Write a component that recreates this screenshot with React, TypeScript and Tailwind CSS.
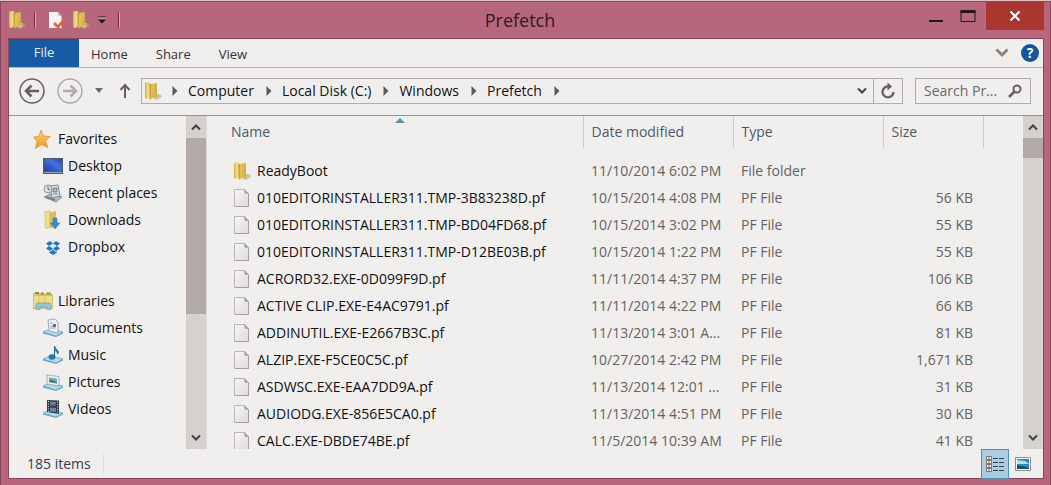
import { ReactNode } from 'react';
import clsx from 'clsx';

interface FileEntry {
  name: string;
  modified: string;
  type: string;
  size?: string;
}

interface NavItem {
  label: string;
  icon: ReactNode;
}

const files: FileEntry[] = [
  { name: 'ReadyBoot', modified: '11/10/2014 6:02 PM', type: 'File folder' },
  { name: '010EDITORINSTALLER311.TMP-3B83238D.pf', modified: '10/15/2014 4:08 PM', type: 'PF File', size: '56 KB' },
  { name: '010EDITORINSTALLER311.TMP-BD04FD68.pf', modified: '10/15/2014 3:02 PM', type: 'PF File', size: '55 KB' },
  { name: '010EDITORINSTALLER311.TMP-D12BE03B.pf', modified: '10/15/2014 1:22 PM', type: 'PF File', size: '55 KB' },
  { name: 'ACRORD32.EXE-0D099F9D.pf', modified: '11/11/2014 4:37 PM', type: 'PF File', size: '106 KB' },
  { name: 'ACTIVE CLIP.EXE-E4AC9791.pf', modified: '11/11/2014 4:22 PM', type: 'PF File', size: '66 KB' },
  { name: 'ADDINUTIL.EXE-E2667B3C.pf', modified: '11/13/2014 3:01 A...', type: 'PF File', size: '81 KB' },
  { name: 'ALZIP.EXE-F5CE0C5C.pf', modified: '10/27/2014 2:42 PM', type: 'PF File', size: '1,671 KB' },
  { name: 'ASDWSC.EXE-EAA7DD9A.pf', modified: '11/13/2014 12:01 ...', type: 'PF File', size: '31 KB' },
  { name: 'AUDIODG.EXE-856E5CA0.pf', modified: '11/13/2014 4:51 PM', type: 'PF File', size: '30 KB' },
  { name: 'CALC.EXE-DBDE74BE.pf', modified: '11/5/2014 10:39 AM', type: 'PF File', size: '41 KB' },
];

const FolderIcon = () => (
  <svg width="18" height="20" viewBox="0 0 18 20" className="shrink-0">
    <defs>
      <linearGradient id="folderFront" x1="0" x2="1" y1="0" y2="0.3">
        <stop offset="0" stopColor="#c99f35" />
        <stop offset="0.35" stopColor="#e3c35c" />
        <stop offset="1" stopColor="#d3ae48" />
      </linearGradient>
    </defs>
    <path d="M13 13l4 .5 1 2.500-4 2.500-4 .5z" fill="#a9a59c" opacity="0.5" />
    <path d="M11 12.500l3.500.5v4l-4 1.500z" fill="#dcc06a" />
    <path d="M1 1.500l5-.5v15l-2.500 2L1 17z" fill="#f0da83" />
    <path d="M1 1.500l1.500 1v15L1 17z" fill="#d9b650" />
    <path d="M5.500 3L13 2v13.500L6 18.500z" fill="url(#folderFront)" />
    <path d="M5.500 3l1.500.5V18l-1.500.5z" fill="#b08a2c" opacity="0.5" />
  </svg>
);

const FileIcon = () => (
  <svg width="18" height="20" viewBox="0 0 18 20" className="shrink-0">
    <defs>
      <linearGradient id="sheet" x1="0" x2="1" y1="0" y2="1">
        <stop offset="0" stopColor="#f8f7f6" />
        <stop offset="1" stopColor="#dedbda" />
      </linearGradient>
    </defs>
    <path d="M1.500 1.500h10l4 4v13h-14z" fill="url(#sheet)" stroke="#bab7b6" />
    <path d="M11.500 1.500l4 4h-3.500z" fill="#a8a4a3" stroke="#a8a4a3" strokeWidth="0.700" />
    <path d="M15.500 6v12.500h-13" fill="none" stroke="#a39f9e" />
  </svg>
);

const PropertiesIcon = () => (
  <svg width="18" height="20" viewBox="0 0 18 20">
    <path d="M1 2h9l3.500 4v12H1z" fill="#f7f4f4" />
    <path d="M10 2v4h3.500z" fill="#c5bcbe" />
    <path d="M6 13l4 4 6-7.500" fill="none" stroke="#e0683a" strokeWidth="2.800" />
  </svg>
);

const StarIcon = () => (
  <svg width="18" height="20" viewBox="0 0 18 20">
    <defs>
      <linearGradient id="star" x1="0" x2="0" y1="0" y2="1">
        <stop offset="0" stopColor="#ffd873" />
        <stop offset="1" stopColor="#ef9620" />
      </linearGradient>
    </defs>
    <path d="M8 1l2.500 6 7 .5-5 4.500 2.500 6.500-6.500-3-6 4 1.500-7-3.500-4.500 5.500-.5z" fill="url(#star)" stroke="#d98d25" strokeWidth="0.700" />
  </svg>
);

const DesktopIcon = () => (
  <svg width="20" height="18" viewBox="0 0 20 18">
    <defs>
      <linearGradient id="screen" x1="0" x2="1" y1="1" y2="0">
        <stop offset="0" stopColor="#1b3fae" />
        <stop offset="0.600" stopColor="#4473dc" />
        <stop offset="1" stopColor="#2048b5" />
      </linearGradient>
    </defs>
    <path d="M0 1h20v16H0z" fill="#525c67" />
    <path d="M1.500 2h17v12h-17z" fill="url(#screen)" />
    <path d="M1 15.500h18" stroke="#8fa6b9" />
  </svg>
);

const RecentIcon = () => (
  <svg width="20" height="20" viewBox="0 0 20 20">
    <path d="M1 14l6-3 12 3-6 5z" fill="#aebbc4" stroke="#737f87" strokeWidth="0.800" />
    <path d="M7 3l8-1 2 11-8 2z" fill="#dfe6ea" stroke="#7f8a92" />
    <path d="M10 5h4v4h-4zM10 11h5" stroke="#6f8593" fill="#a7bbc7" />
    <circle cx="5" cy="6" r="4" fill="#dcdfe1" stroke="#8f969b" />
    <path d="M5 3.500V6l2 1" stroke="#59636b" fill="none" />
    <path d="M3 14l9 3" stroke="#647d90" strokeWidth="1.500" />
  </svg>
);

const DownloadsIcon = () => (
  <svg width="20" height="20" viewBox="0 0 20 20">
    <path d="M2 1.500l5-.5v16l-3 1.500-2-1z" fill="#f0dd94" stroke="#ceb15c" strokeWidth="0.600" />
    <path d="M6 2.500L13 1v15l-6 2.500z" fill="#dfbd5d" />
    <path d="M10 8h4v5h3l-5 6-5-6h3z" fill="#3191ca" stroke="#247aad" strokeWidth="0.500" />
  </svg>
);

const DropboxIcon = () => (
  <svg width="20" height="20" viewBox="0 0 20 20" fill="#1877c9">
    <path d="M7 4l3 2.500-4 2.500-3-2.500zM13 4l4 2.500L14 9l-4-2.500zM3 11.500L6 9l4 2.500L7 14zM14 9l3 2.500-4 2.500-3-2.500zM6 14.500l1 .5 3-2.500 3 2.500 1-.5v1L10 18l-4-2.500z" />
  </svg>
);

const LibrariesIcon = () => (
  <svg width="20" height="20" viewBox="0 0 20 20">
    <path d="M0 2h8l1 1h10.500v15H0z" fill="#e0c05c" />
    <path d="M2 1h4v2H2z" fill="#58a654" />
    <path d="M8 1.500h3v2H8z" fill="#d96f4c" />
    <path d="M13 1.500h5v2h-5z" fill="#79ad62" />
    <path d="M.5 4.500h19v12H.5z" fill="#f0db86" stroke="#d5b654" strokeWidth="0.700" />
    <path d="M6 5v8M12 5v8" stroke="#dfc56b" />
    <path d="M3 18.500V14q0-2 2-2h11q2 0 2 2v4.500h-4V16H7v2.500z" fill="#8fc5e1" stroke="#5d9dbd" strokeWidth="0.600" />
  </svg>
);

// the blue tray that each library icon stands on
const LibraryTray = ({ children }: { children: ReactNode }) => (
  <svg width="20" height="20" viewBox="0 0 20 20">
    <path d="M0 14l7-3 13 3-7 4z" fill="#b4daed" stroke="#71a6c6" strokeWidth="0.800" />
    <path d="M0 14v1.500l13 3.500 7-3.500V14l-7 4z" fill="#6ca3c5" />
    {children}
  </svg>
);

const DocumentsIcon = () => (
  <LibraryTray>
    <path d="M5 2l7-1 3 3v11l-9-2z" fill="#f0f2f7" stroke="#8e96b2" strokeWidth="0.800" />
    <path d="M7 5h3M7 8h6M7 10h6" stroke="#9da3bf" />
    <path d="M10 6h3v3h-3z" fill="#5073a2" />
  </LibraryTray>
);

const MusicIcon = () => (
  <LibraryTray>
    <ellipse cx="9" cy="12" rx="3.500" ry="2.800" fill="#2874ac" />
    <path d="M11.500 12V1q1 3 3.500 5 1 2-.5 3 0-3-2-3.500" fill="#3285bf" stroke="#246b9e" />
  </LibraryTray>
);

const PicturesIcon = () => (
  <LibraryTray>
    <path d="M4 3l12 1.500V14L4 12z" fill="#e8f0f4" stroke="#8ba2b0" strokeWidth="0.800" />
    <path d="M6 5.500l8 1v5L6 10z" fill="#74aed0" />
    <path d="M6 8.500l3-1 5 3v1L6 10z" fill="#4d805e" />
  </LibraryTray>
);

const VideosIcon = () => (
  <LibraryTray>
    <path d="M4 1l12 .5V15L4 13z" fill="#373b42" />
    <path d="M7 2.500l6 .5v4l-6-.5zM7 8.500l6 .5v4l-6-.5z" fill="#5b87b7" />
    <path d="M7 5l3 1 3-2v3l-6-.5z" fill="#8a5145" />
    <path d="M5.500 2v11M14.500 2.500V14" stroke="#d4d6d7" strokeDasharray="1 1.500" />
  </LibraryTray>
);

const favorites: NavItem[] = [
  { label: 'Desktop', icon: <DesktopIcon /> },
  { label: 'Recent places', icon: <RecentIcon /> },
  { label: 'Downloads', icon: <DownloadsIcon /> },
  { label: 'Dropbox', icon: <DropboxIcon /> },
];

const libraries: NavItem[] = [
  { label: 'Documents', icon: <DocumentsIcon /> },
  { label: 'Music', icon: <MusicIcon /> },
  { label: 'Pictures', icon: <PicturesIcon /> },
  { label: 'Videos', icon: <VideosIcon /> },
];

const crumbs = ['Computer', 'Local Disk (C:)', 'Windows', 'Prefetch'];

const CrumbArrow = () => (
  <svg width="6" height="10" viewBox="0 0 6 10" className="shrink-0">
    <path d="M0.500 0l5 5-5 5z" fill="#5e5a5a" />
  </svg>
);

const Chevron = ({ up = false }: { up?: boolean }) => (
  <svg width="10" height="8" viewBox="0 0 10 8" fill="none" stroke="#454242" strokeWidth="2">
    <path d={up ? 'M1 6.500l4-4 4 4' : 'M1 1.500l4 4 4-4'} />
  </svg>
);

const ScrollBar = ({ thumb }: { thumb: string }) => (
  <div className="flex w-5 shrink-0 flex-col bg-[#d5d1cf]">
    <button aria-label="Scroll up" className="flex h-[22px] shrink-0 items-center justify-center">
      <Chevron up />
    </button>
    <div className="min-h-0 flex-1">
      <div className={clsx('bg-[#b1aaa6]', thumb)} />
    </div>
    <button aria-label="Scroll down" className="flex h-[22px] shrink-0 items-center justify-center">
      <Chevron />
    </button>
  </div>
);

const TitleBar = () => (
  <header className="flex h-9 shrink-0 items-start justify-between">
    <div className="flex h-9 items-center">
      <FolderIcon />
      <span className="ml-2 h-4 w-0.5 border-l border-[#742f45] bg-[#dca4b5]" />
      <button aria-label="Properties" className="ml-3"><PropertiesIcon /></button>
      <button aria-label="New folder" className="ml-1.5"><FolderIcon /></button>
      <button aria-label="Customize Quick Access Toolbar" className="ml-1 p-1">
        <svg width="8" height="8" viewBox="0 0 8 8">
          <path d="M0 1h8" stroke="#21151a" />
          <path d="M0 2h8" stroke="#e3b9c5" />
          <path d="M0 3.500h8l-4 4z" fill="#21151a" />
        </svg>
      </button>
      <span className="ml-2 h-4 w-0.5 border-l border-[#742f45] bg-[#dca4b5]" />
    </div>
    <h1 className="text-lg leading-9 text-[#35161f]">Prefetch</h1>
    <div className="flex h-7 items-stretch">
      <button aria-label="Minimize" className="px-2">
        <svg width="16" height="14" viewBox="0 0 16 14">
          <path d="M1 12h14" stroke="#26151b" strokeWidth="2" />
        </svg>
      </button>
      <button aria-label="Maximize" className="px-2">
        <svg width="16" height="14" viewBox="0 0 16 14">
          <path d="M1 2h14v10.500H1z" fill="none" stroke="#26151b" />
          <path d="M.5 2.500h15" stroke="#26151b" strokeWidth="3" />
        </svg>
      </button>
      <button aria-label="Close" className="ml-0.5 flex w-[58px] items-center justify-center bg-[#a93730]">
        <svg width="12" height="10" viewBox="0 0 12 10">
          <path d="M1.500 .5l9 9M10.500 .5l-9 9" stroke="#fff" strokeWidth="2" />
        </svg>
      </button>
    </div>
  </header>
);

const Ribbon = () => (
  <div className="flex h-[29px] shrink-0 items-stretch border-b border-[#b5b2b1] text-[13px]">
    <button className="w-[70px] bg-[#165ba3] text-[#e4eef8]">File</button>
    <nav className="flex flex-1 items-center gap-7 pt-1 pl-3 text-[#333]">
      <button>Home</button>
      <button>Share</button>
      <button>View</button>
    </nav>
    <div className="flex items-center gap-3 pr-1">
      <button aria-label="Expand the Ribbon">
        <svg width="14" height="10" viewBox="0 0 14 10" fill="none" stroke="#8b8483" strokeWidth="3">
          <path d="M1.500 1.500l5.500 5.500 5.500-5.500" />
        </svg>
      </button>
      <button className="h-[18px] w-[18px] rounded-full bg-[#165599] text-sm leading-[18px] font-bold text-white">?</button>
    </div>
  </div>
);

const AddressRow = () => (
  <div className="flex h-12 shrink-0 items-center border-b border-[#999394] pr-3 pb-0.5 pl-2.5 text-sm">
    <button aria-label="Back">
      <svg width="26" height="26" viewBox="0 0 26 26" fill="none" stroke="#666161">
        <circle cx="13" cy="13" r="12" strokeWidth="1.500" />
        <path d="M20 13H8M12.500 7.500L7 13l5.500 5.500" strokeWidth="2.500" />
      </svg>
    </button>
    <button aria-label="Forward" className="ml-3">
      <svg width="26" height="26" viewBox="0 0 26 26" fill="none" stroke="#b0acab">
        <circle cx="13" cy="13" r="12" strokeWidth="1.500" />
        <path d="M6 13h12M13.500 7.500L19 13l-5.500 5.500" strokeWidth="2.500" />
      </svg>
    </button>
    <button aria-label="Recent locations" className="ml-3">
      <svg width="8" height="5" viewBox="0 0 8 5"><path d="M0 0h8L4 5z" fill="#6f6a6a" /></svg>
    </button>
    <button aria-label="Up" className="ml-4">
      <svg width="12" height="16" viewBox="0 0 12 16" fill="none" stroke="#666161" strokeWidth="2">
        <path d="M6 15V2M1.500 7L6 2l4.500 5" />
      </svg>
    </button>
    <div className="ml-2.5 flex h-[26px] min-w-0 flex-1 border border-[#b1adac]">
      <nav className="flex flex-1 items-center gap-2.5 pl-0.5 whitespace-nowrap">
        <FolderIcon />
        <CrumbArrow />
        {crumbs.map((crumb) => (
          <div key={crumb} className="flex items-center gap-3">
            <a href="#" className="text-[#111]">{crumb}</a>
            <CrumbArrow />
          </div>
        ))}
      </nav>
      <button aria-label="Previous locations" className="px-1.5"><Chevron /></button>
      <button aria-label="Refresh" className="flex w-[29px] items-center justify-center border-l border-[#b1adac]">
        <svg width="16" height="18" viewBox="0 0 16 18" fill="none" stroke="#666161" strokeWidth="2.300">
          <path d="M9 4.500A5.500 5.500 0 1 0 13.500 10" />
          <path d="M7.500 .5l4.500 4-4.500 4z" fill="#666161" stroke="none" />
        </svg>
      </button>
    </div>
    <label className="ml-3 flex h-[26px] w-[116px] items-center border border-[#b1adac] px-2">
      <input
        type="text"
        aria-label="Search Prefetch"
        placeholder="Search Pr..."
        className="min-w-0 flex-1 bg-transparent outline-none placeholder:text-[#6b6767]"
      />
      <svg width="14" height="14" viewBox="0 0 14 14" fill="none" stroke="#666161">
        <circle cx="9" cy="5" r="3.500" strokeWidth="2" />
        <path d="M6.500 7.500L1 13" strokeWidth="2.500" />
      </svg>
    </label>
  </div>
);

const NavGroup = ({ label, icon, items }: { label: string; icon: ReactNode; items: NavItem[] }) => (
  <section>
    <a href="#" className="flex h-[27px] items-center pl-6">
      <span className="flex w-[25px] shrink-0">{icon}</span>
      {label}
    </a>
    <ul>
      {items.map((item) => (
        <li key={item.label}>
          <a href="#" className="flex h-[27px] items-center pl-[34px]">
            <span className="flex w-[25px] shrink-0">{item.icon}</span>
            {item.label}
          </a>
        </li>
      ))}
    </ul>
  </section>
);

const FileTable = () => (
  <table className="w-full table-fixed text-left text-sm whitespace-nowrap text-[#666261]">
    <colgroup>
      <col />
      <col className="w-[150px]" />
      <col className="w-[150px]" />
      <col className="w-[100px]" />
      <col className="w-10" />
    </colgroup>
    <thead className="text-[#4e5864]">
      <tr className="h-8">
        <th className="relative border-r border-[#d0cdcc] pl-6 font-normal">
          Name
          <svg width="10" height="5" viewBox="0 0 10 5" className="absolute top-0.5 left-1/2">
            <path d="M0 5l5-5 5 5z" fill="#5b96ae" />
          </svg>
        </th>
        <th className="border-r border-[#d0cdcc] pl-2 font-normal">Date modified</th>
        <th className="border-r border-[#d0cdcc] pl-2 font-normal">Type</th>
        <th className="border-r border-[#d0cdcc] pl-2 font-normal">Size</th>
        <td />
      </tr>
    </thead>
    <tbody>
      <tr className="h-[9px]" />
      {files.map((file) => (
        <tr key={file.name} className="h-[27px]">
          <td className="pl-[26px] text-[#111]">
            <div className="flex items-center gap-1.5">
              {file.size ? <FileIcon /> : <FolderIcon />}
              {file.name}
            </div>
          </td>
          <td className="pl-2">{file.modified}</td>
          <td className="pl-2">{file.type}</td>
          <td className="pr-2.5 text-right">{file.size}</td>
          <td />
        </tr>
      ))}
    </tbody>
  </table>
);

const StatusBar = () => (
  <footer className="flex h-[29px] shrink-0 items-center justify-between pr-1.5 pl-[18px] text-sm text-[#353c48]">
    <span className="border-r border-[#e0dddc] pr-3">185 items</span>
    <div className="flex items-center">
      <button aria-label="Details view" className="border border-[#4b93b4] bg-[#abcde1] px-1 py-1.5">
        <svg width="18" height="16" viewBox="0 0 18 16">
          {[0, 4, 8, 12].map((y) => (
            <g key={y}>
              <path d={`M.5 ${y + 0.5}h5v3h-5z`} fill="#fff" stroke="#75706f" />
              <path d={`M2 ${y + 2}h2`} stroke="#b26d57" />
              <path d={`M7 ${y + 2.5}h5M13 ${y + 2.5}h5`} stroke="#34434e" />
            </g>
          ))}
        </svg>
      </button>
      <button aria-label="Thumbnail view" className="px-1.5">
        <svg width="16" height="14" viewBox="0 0 16 14">
          <path d="M.5 .5h15v13H.5z" fill="#fff" stroke="#85929c" />
          <path d="M2 2h12v10H2z" fill="#3284bf" />
          <path d="M2 3l8 1 4 3H2z" fill="#bae1f0" />
          <path d="M2 8l4 1 8 2v1H2z" fill="#185448" />
        </svg>
      </button>
    </div>
  </footer>
);

const App = () => {
  return (
    <div className="flex h-screen flex-col border-t border-[#dfc1c8] bg-[#b6677d] font-['Open_Sans','Noto_Sans',sans-serif]">
      <div className="flex min-h-0 flex-1 flex-col border border-b-0 border-[#87465a] pr-1.5 pb-1.5 pl-[7px]">
        <TitleBar />
        <main className="flex min-h-0 flex-1 flex-col border border-[#87465a] bg-[#f0efee]">
          <Ribbon />
          <AddressRow />
          <div className="flex min-h-0 flex-1">
            <aside className="flex w-[198px] shrink-0 border-r border-[#dedbda] text-sm text-[#111]">
              <nav className="flex min-w-0 flex-1 flex-col gap-[27px] overflow-hidden pt-[9px]">
                <NavGroup label="Favorites" icon={<StarIcon />} items={favorites} />
                <NavGroup label="Libraries" icon={<LibrariesIcon />} items={libraries} />
              </nav>
              <ScrollBar thumb="h-[61%]" />
            </aside>
            <div className="min-w-0 flex-1 overflow-hidden">
              <FileTable />
            </div>
            <ScrollBar thumb="h-5" />
          </div>
          <StatusBar />
        </main>
      </div>
    </div>
  );
};

export default App;
